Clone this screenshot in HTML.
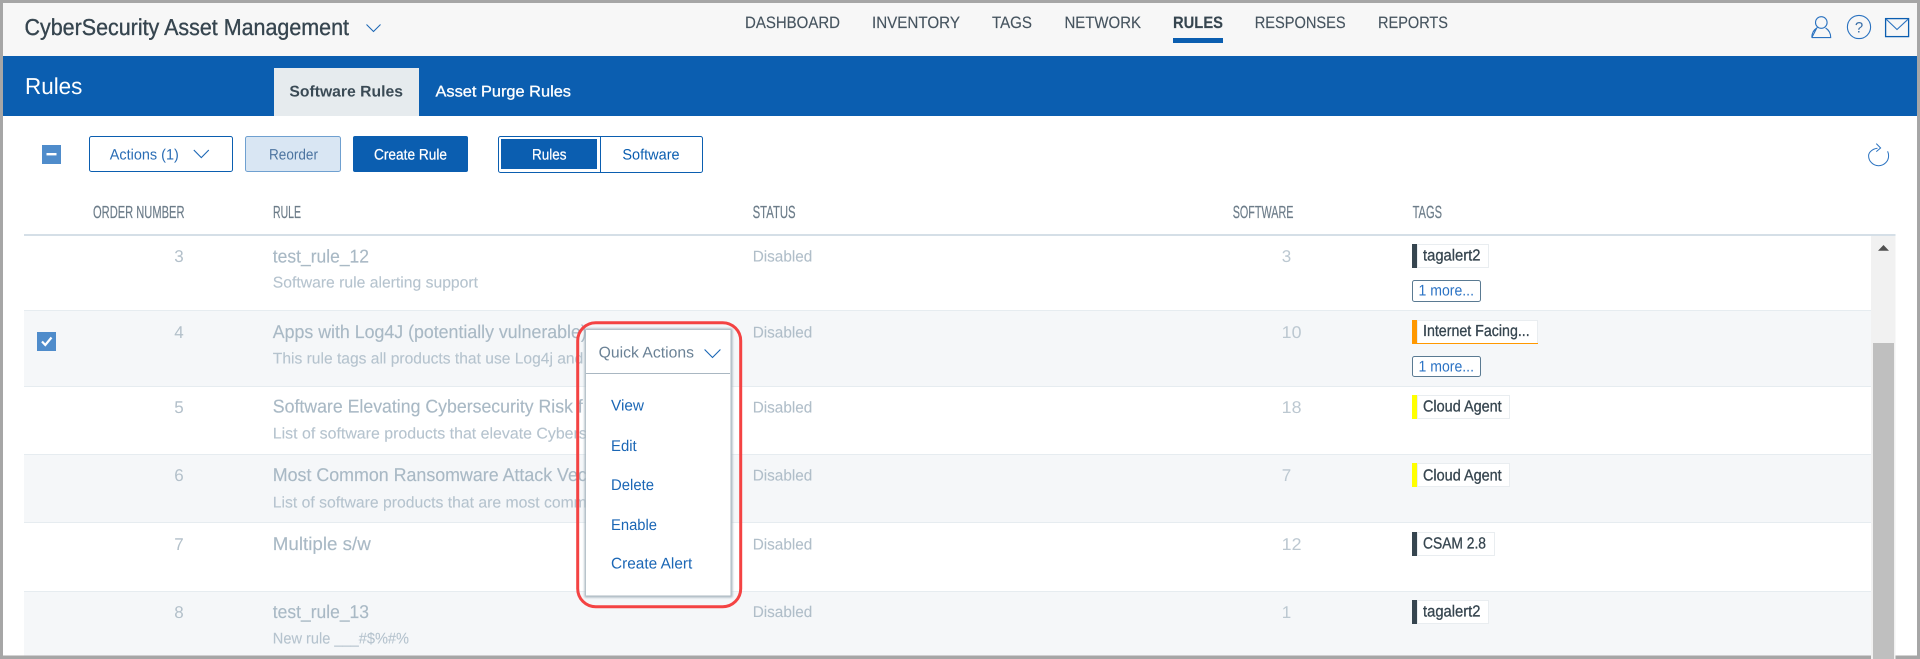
<!DOCTYPE html>
<html lang="en">
<head>
<meta charset="utf-8">
<title>Rules</title>
<style>
html,body{margin:0;padding:0;background:#fff;width:1920px;height:659px;overflow:hidden}
svg{display:block;position:absolute;left:0;top:0}
text{font-family:"Liberation Sans",sans-serif;white-space:pre;text-rendering:geometricPrecision}
.nav{font-size:16.5px;fill:#46545f;stroke:#46545f;stroke-width:.15px}
.th{font-size:17.5px;fill:#6c7c89;stroke:#6c7c89;stroke-width:.2px}
.num{font-size:17px;fill:#b3c0ca}
.sw{font-size:17px;fill:#bcc8d1}
.name{font-size:18.5px;fill:#a9b9c5;stroke:#a9b9c5;stroke-width:.15px}
.desc{font-size:15.5px;fill:#b5c3ce;stroke:#b5c3ce;stroke-width:.1px}
.st{font-size:15.5px;fill:#b0bec9;stroke:#b0bec9;stroke-width:.1px}
.tag{font-size:16px;fill:#36454f;stroke:#36454f;stroke-width:.3px}
.more{font-size:15.5px;fill:#2a72c4}
.mi{font-size:15.5px;fill:#1a66b5}
.btn{font-size:15px}
.ic{fill:none;stroke:#2a72c0;stroke-width:1.1}
</style>
</head>
<body>
<svg width="1920" height="659" viewBox="0 0 1920 659" xmlns="http://www.w3.org/2000/svg">
<defs>
<filter id="sh" x="-10%" y="-10%" width="120%" height="120%"><feGaussianBlur stdDeviation="1"/></filter>
</defs>
<rect width="1920" height="659" fill="#fff"/>
<!-- header -->
<rect x="3" y="3" width="1914" height="53" fill="#f7f7f7"/>
<text x="24.5" y="35" font-size="23" fill="#36454f" stroke="#36454f" stroke-width=".35" textLength="324.5" lengthAdjust="spacingAndGlyphs">CyberSecurity Asset Management</text>
<path d="M366.5 24.5 L373.5 31.5 L380.5 24.5" fill="none" stroke="#1a66b5" stroke-width="1"/>
<text class="nav" x="745" y="28" textLength="95" lengthAdjust="spacingAndGlyphs">DASHBOARD</text>
<text class="nav" x="872" y="28" textLength="88" lengthAdjust="spacingAndGlyphs">INVENTORY</text>
<text class="nav" x="992" y="28" textLength="40" lengthAdjust="spacingAndGlyphs">TAGS</text>
<text class="nav" x="1064.5" y="28" textLength="76.5" lengthAdjust="spacingAndGlyphs">NETWORK</text>
<text class="nav" x="1173" y="28" textLength="50" lengthAdjust="spacingAndGlyphs" style="fill:#36454f;font-weight:700">RULES</text>
<rect x="1173" y="38" width="50" height="5" fill="#0b5eb0"/>
<text class="nav" x="1254.7" y="28" textLength="91" lengthAdjust="spacingAndGlyphs">RESPONSES</text>
<text class="nav" x="1378" y="28" textLength="70" lengthAdjust="spacingAndGlyphs">REPORTS</text>
<!-- header icons -->
<circle class="ic" cx="1821.3" cy="22.5" r="5.8"/>
<path class="ic" d="M1811.8 37.6 H1830.7 C1830.7 33 1828.5 29.8 1825.6 28 M1816.8 28 C1814 29.8 1811.8 33 1811.8 37.6 Z"/>
<circle class="ic" cx="1859" cy="27" r="11.6"/>
<text x="1859" y="32.5" font-size="15" fill="#3a6fa8" text-anchor="middle">?</text>
<rect x="1885.6" y="18.6" width="23" height="18" fill="none" stroke="#0b5eb0" stroke-width="1.3"/>
<path d="M1886 19 L1897 29.5 L1908.3 19" fill="none" stroke="#2a72c0" stroke-width="1.1"/>
<!-- blue bar -->
<rect x="3" y="56" width="1914" height="60" fill="#0b5eb0"/>
<text x="25" y="94" font-size="23" fill="#fff" textLength="57.4" lengthAdjust="spacingAndGlyphs">Rules</text>
<rect x="274" y="68" width="145" height="48" fill="#e6ebee"/>
<text x="289.4" y="96.6" font-size="15.5" fill="#3a4a55" font-weight="700" textLength="113.6" lengthAdjust="spacingAndGlyphs">Software Rules</text>
<text x="435.5" y="96.6" font-size="15.5" fill="#fff" stroke="#fff" stroke-width=".3" textLength="135.5" lengthAdjust="spacingAndGlyphs">Asset Purge Rules</text>
<!-- toolbar -->
<rect x="42" y="145" width="19" height="19" fill="#4f8ccb"/>
<rect x="46.5" y="153" width="10" height="2.4" fill="#fff"/>
<rect x="89.5" y="136.5" width="143" height="35" rx="2" fill="#fff" stroke="#0b5eb0"/>
<text class="btn" x="109.8" y="159.6" fill="#2a6db5" textLength="69" lengthAdjust="spacingAndGlyphs">Actions (1)</text>
<path d="M193.8 150 L201.3 157.6 L208.8 150" fill="none" stroke="#1a66b5" stroke-width="1.1"/>
<rect x="245.5" y="136.5" width="95" height="35" rx="2" fill="#d9e6f3" stroke="#6fa0d0"/>
<text class="btn" x="269" y="159.6" fill="#4c74a0" textLength="49" lengthAdjust="spacingAndGlyphs">Reorder</text>
<rect x="353" y="136" width="115" height="36" rx="2" fill="#0b5eb0"/>
<text class="btn" x="374" y="159.6" fill="#fff" stroke="#fff" stroke-width=".25" textLength="73" lengthAdjust="spacingAndGlyphs">Create Rule</text>
<rect x="498.5" y="136.5" width="204" height="36" rx="2" fill="#fff" stroke="#0b5eb0"/>
<rect x="501" y="139" width="96" height="30" fill="#0b5eb0"/>
<rect x="600" y="137" width="1" height="35" fill="#0b5eb0"/>
<text class="btn" x="532" y="159.6" fill="#fff" stroke="#fff" stroke-width=".25" textLength="34.5" lengthAdjust="spacingAndGlyphs">Rules</text>
<text class="btn" x="622.4" y="159.6" fill="#0b5eb0" textLength="57.2" lengthAdjust="spacingAndGlyphs">Software</text>
<!-- refresh -->
<path d="M1877.5 148.3 C1872.3 148.8 1868.6 152.6 1868.6 155.7 A10 10 0 0 0 1888.6 155.7 C1888.6 154 1888.2 152.6 1887.6 151.3" fill="none" stroke="#2a72c0" stroke-width="1"/>
<path d="M1876.3 143.6 L1880.6 148 L1876.3 151.6" fill="none" stroke="#2a72c0" stroke-width="1"/>
<!-- table head -->
<text class="th" x="93" y="218" textLength="91.5" lengthAdjust="spacingAndGlyphs">ORDER NUMBER</text>
<text class="th" x="273" y="218" textLength="28" lengthAdjust="spacingAndGlyphs">RULE</text>
<text class="th" x="752.6" y="218" textLength="43" lengthAdjust="spacingAndGlyphs">STATUS</text>
<text class="th" x="1232.7" y="218" textLength="60.8" lengthAdjust="spacingAndGlyphs">SOFTWARE</text>
<text class="th" x="1412.6" y="218" textLength="29.4" lengthAdjust="spacingAndGlyphs">TAGS</text>
<rect x="24" y="234" width="1871.5" height="2" fill="#d5dfe7"/>
<!-- row backgrounds -->
<rect x="24" y="311" width="1847" height="75" fill="#f5f7f9"/>
<rect x="24" y="455" width="1847" height="68" fill="#f5f7f9"/>
<rect x="24" y="592" width="1847" height="67" fill="#f5f7f9"/>
<g fill="#e6ecf0">
<rect x="24" y="310" width="1847" height="1"/>
<rect x="24" y="386" width="1847" height="1"/>
<rect x="24" y="454" width="1847" height="1"/>
<rect x="24" y="522" width="1847" height="1"/>
<rect x="24" y="591" width="1847" height="1"/>
</g>
<!-- checkbox row 2 -->
<rect x="37" y="332" width="19" height="19" fill="#4f8ccb"/>
<path d="M42 341.5 L45.3 345 L51.5 337.5" fill="none" stroke="#fff" stroke-width="2.2"/>
<!-- order numbers -->
<text class="num" x="174.3" y="262">3</text>
<text class="num" x="174.3" y="338">4</text>
<text class="num" x="174.3" y="413">5</text>
<text class="num" x="174.3" y="481">6</text>
<text class="num" x="174.3" y="550">7</text>
<text class="num" x="174.3" y="618">8</text>
<!-- rules -->
<text class="name" x="272.8" y="262.3" textLength="96.2" lengthAdjust="spacingAndGlyphs">test_rule_12</text>
<text class="desc" x="272.8" y="287.3" textLength="205.2" lengthAdjust="spacingAndGlyphs">Software rule alerting support</text>
<text class="name" x="272.8" y="338" textLength="314" lengthAdjust="spacingAndGlyphs">Apps with Log4J (potentially vulnerable)</text>
<text class="desc" x="272.8" y="363.3" textLength="310.5" lengthAdjust="spacingAndGlyphs">This rule tags all products that use Log4j and</text>
<text class="name" x="272.8" y="412.7" textLength="310" lengthAdjust="spacingAndGlyphs">Software Elevating Cybersecurity Risk f</text>
<text class="desc" x="272.8" y="438.3" textLength="314" lengthAdjust="spacingAndGlyphs">List of software products that elevate Cybers</text>
<text class="name" x="272.8" y="481" textLength="314" lengthAdjust="spacingAndGlyphs">Most Common Ransomware Attack Vec</text>
<text class="desc" x="272.8" y="507.3" textLength="314" lengthAdjust="spacingAndGlyphs">List of software products that are most comm</text>
<text class="name" x="272.8" y="550" textLength="98" lengthAdjust="spacingAndGlyphs">Multiple s/w</text>
<text class="name" x="272.8" y="618" textLength="96.2" lengthAdjust="spacingAndGlyphs">test_rule_13</text>
<text class="desc" x="272.8" y="643.3" textLength="136.2" lengthAdjust="spacingAndGlyphs">New rule ___#$%#%</text>
<!-- status -->
<text class="st" x="752.7" y="261.7" textLength="59.6" lengthAdjust="spacingAndGlyphs">Disabled</text>
<text class="st" x="752.7" y="337.7" textLength="59.6" lengthAdjust="spacingAndGlyphs">Disabled</text>
<text class="st" x="752.7" y="412.3" textLength="59.6" lengthAdjust="spacingAndGlyphs">Disabled</text>
<text class="st" x="752.7" y="480.7" textLength="59.6" lengthAdjust="spacingAndGlyphs">Disabled</text>
<text class="st" x="752.7" y="549.7" textLength="59.6" lengthAdjust="spacingAndGlyphs">Disabled</text>
<text class="st" x="752.7" y="617" textLength="59.6" lengthAdjust="spacingAndGlyphs">Disabled</text>
<!-- software counts -->
<text class="sw" x="1281.7" y="262">3</text>
<text class="sw" x="1281.7" y="338" textLength="19.8" lengthAdjust="spacingAndGlyphs">10</text>
<text class="sw" x="1281.7" y="413" textLength="19.8" lengthAdjust="spacingAndGlyphs">18</text>
<text class="sw" x="1281.7" y="481">7</text>
<text class="sw" x="1281.7" y="550" textLength="19.8" lengthAdjust="spacingAndGlyphs">12</text>
<text class="sw" x="1281.7" y="618">1</text>
<!-- tags -->
<rect x="1417.5" y="244.5" width="71" height="23" fill="#fff" stroke="#e9edf0"/><rect x="1412" y="244" width="5" height="24" fill="#36454f"/>
<text class="tag" x="1423" y="260.7" textLength="57.5" lengthAdjust="spacingAndGlyphs">tagalert2</text>
<rect x="1412.5" y="280.5" width="68" height="21" rx="2" fill="#fff" stroke="#5a7a92"/>
<text class="more" x="1418.5" y="295.5" textLength="55.5" lengthAdjust="spacingAndGlyphs">1 more...</text>
<rect x="1417.5" y="320.5" width="120" height="23" fill="#fff" stroke="#e9edf0"/><rect x="1412" y="343" width="126" height="1" fill="#ff9800"/><rect x="1412" y="320" width="5" height="24" fill="#ff9800"/>
<text class="tag" x="1423" y="336" textLength="106.7" lengthAdjust="spacingAndGlyphs">Internet Facing...</text>
<rect x="1412.5" y="356.5" width="68" height="20" rx="2" fill="#fff" stroke="#5a7a92"/>
<text class="more" x="1418.5" y="371.3" textLength="55.5" lengthAdjust="spacingAndGlyphs">1 more...</text>
<rect x="1417.5" y="395.5" width="92" height="23" fill="#fff" stroke="#e9edf0"/><rect x="1412" y="395" width="5" height="24" fill="#ffff00"/>
<text class="tag" x="1423" y="411.3" textLength="78.7" lengthAdjust="spacingAndGlyphs">Cloud Agent</text>
<rect x="1417.5" y="463.5" width="92" height="23" fill="#fff" stroke="#e9edf0"/><rect x="1412" y="463" width="5" height="24" fill="#ffff00"/>
<text class="tag" x="1423" y="480.3" textLength="78.7" lengthAdjust="spacingAndGlyphs">Cloud Agent</text>
<rect x="1417.5" y="532.5" width="77" height="23" fill="#fff" stroke="#e9edf0"/><rect x="1412" y="532" width="5" height="24" fill="#36454f"/>
<text class="tag" x="1423" y="548.3" textLength="63" lengthAdjust="spacingAndGlyphs">CSAM 2.8</text>
<rect x="1417.5" y="600.5" width="71" height="23" fill="#fff" stroke="#e9edf0"/><rect x="1412" y="600" width="5" height="24" fill="#36454f"/>
<text class="tag" x="1423" y="616.7" textLength="57.5" lengthAdjust="spacingAndGlyphs">tagalert2</text>
<!-- popup -->
<rect x="584.5" y="328.5" width="148" height="269" fill="#a8b6bf" filter="url(#sh)"/>
<rect x="586" y="330" width="144.5" height="265.5" fill="#fff"/>
<text x="598.7" y="357.3" font-size="15.5" fill="#6b8296" textLength="95.3" lengthAdjust="spacingAndGlyphs">Quick Actions</text>
<path d="M704.6 349.5 L712.5 357.5 L720.4 349.5" fill="none" stroke="#1a66b5" stroke-width="1.1"/>
<rect x="586" y="373" width="144" height="1" fill="#a9b7c2"/>
<text class="mi" x="611" y="410.7" textLength="33" lengthAdjust="spacingAndGlyphs">View</text>
<text class="mi" x="611" y="451" textLength="25.7" lengthAdjust="spacingAndGlyphs">Edit</text>
<text class="mi" x="611" y="490" textLength="43" lengthAdjust="spacingAndGlyphs">Delete</text>
<text class="mi" x="611" y="530" textLength="46" lengthAdjust="spacingAndGlyphs">Enable</text>
<text class="mi" x="611" y="568.7" textLength="81.3" lengthAdjust="spacingAndGlyphs">Create Alert</text>
<rect x="577.7" y="322.7" width="163" height="284" rx="18" ry="18" fill="none" stroke="#f44343" stroke-width="3"/>
<!-- outer grey border -->
<rect x="0" y="0" width="1920" height="3" fill="#a6a6a6"/>
<rect x="0" y="0" width="3" height="659" fill="#a6a6a6"/>
<rect x="1917" y="0" width="3" height="659" fill="#a6a6a6"/>
<rect x="0" y="655.5" width="1920" height="3.5" fill="#a6a6a6"/>
<!-- scrollbar -->
<rect x="1871" y="236" width="24.5" height="423" fill="#f1f1f1"/>
<path d="M1878 250.7 H1889 L1883.5 245 Z" fill="#505050"/>
<rect x="1873" y="343" width="21" height="316" fill="#bfbfbf"/>
</svg>
</body>
</html>
